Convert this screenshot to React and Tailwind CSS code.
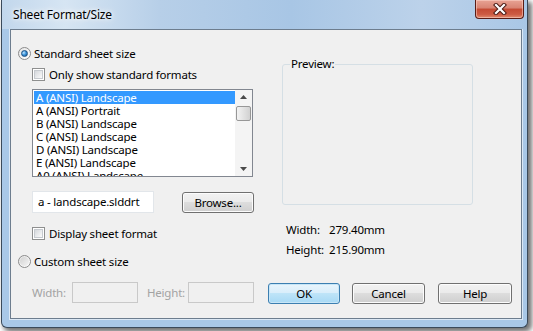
import React from "react";

function Radio({ checked }) {
  return (
    <span className="relative flex h-[13px] w-[13px] shrink-0 items-center justify-center rounded-full border border-[#8b8b8b] bg-gradient-to-br from-[#e6e6e6] to-[#ffffff]">
      {checked ? (
        <span className="h-[7px] w-[7px] rounded-full border border-[#1c4f82] bg-[radial-gradient(circle_at_35%_35%,#c4e6ff_0%,#3f97dc_45%,#0c4f92_100%)]" />
      ) : (
        <span className="h-[9px] w-[9px] rounded-full bg-gradient-to-br from-[#d2d2d2] to-[#f4f4f4]" />
      )}
    </span>
  );
}

function Check() {
  return (
    <span className="flex h-[13px] w-[13px] shrink-0 items-center justify-center border border-[#8e8f8f] bg-white">
      <span className="h-[9px] w-[9px] border border-[#c6cacf] bg-gradient-to-br from-[#d5d8dc] to-[#fbfbfb]" />
    </span>
  );
}

function Btn({ children, def, className = "" }) {
  return (
    <div
      className={
        "flex h-[21px] items-center justify-center rounded-[3px] border text-black " +
        (def
          ? "border-[#3c7fb1] bg-[linear-gradient(#e9f5fc_0%,#d9eefb_45%,#bee4f8_50%,#a7d9f5_100%)] shadow-[inset_0_0_0_1px_#c8e6f7]"
          : "border-[#707070] bg-[linear-gradient(#f2f2f2_0%,#ebebeb_45%,#dddddd_50%,#cfcfcf_100%)] shadow-[inset_0_0_0_1px_#fcfcfc]") +
        " " +
        className
      }
    >
      {children}
    </div>
  );
}

const items = [
  "A (ANSI) Landscape",
  "A (ANSI) Portrait",
  "B (ANSI) Landscape",
  "C (ANSI) Landscape",
  "D (ANSI) Landscape",
  "E (ANSI) Landscape",
  "A0 (ANSI) Landscape",
];

export default function App() {
  return (
    <div className="h-[331px] w-[533px] overflow-hidden bg-white font-['Noto_Sans',sans-serif] text-[11.5px] leading-[16px] tracking-[-0.2px] text-black">
      <div className="ml-[1px] flex h-[328px] w-[527px] flex-col rounded-b-[6px] border-x border-b border-[#3b4a5a] bg-[#a9c8e7] shadow-[3px_3px_5px_1px_rgba(0,0,0,0.55)]">
        {/* title bar */}
        <div className="relative flex h-[29px] shrink-0 items-start bg-[linear-gradient(90deg,#c2d7ec_0%,#d6e5f3_12%,#b7cfe8_30%,#a8c6e5_55%,#bcd2ea_80%,#a9c7e6_100%)]">
          <span className="ml-[11px] mt-[7px] text-[12px] leading-[16px] text-black [text-shadow:0_0_8px_#ffffff,0_0_4px_#ffffff]">
            Sheet Format/Size
          </span>
          <div className="absolute left-[473px] top-0 flex h-[19px] w-[49px] items-center justify-center rounded-b-[4px] border border-t-0 border-[#5a1d16] bg-[linear-gradient(#e8a394_0%,#d88372_45%,#c44a33_50%,#cd5b43_80%,#e08b6f_100%)] shadow-[inset_0_0_0_1px_rgba(255,220,210,0.5)]">
            <svg width="14" height="12" viewBox="0 0 14 12">
              <path d="M3 2 L11 10 M11 2 L3 10" stroke="#4b1a14" strokeWidth="4.2" strokeLinecap="square" />
              <path d="M3 2 L11 10 M11 2 L3 10" stroke="#ffffff" strokeWidth="2.2" strokeLinecap="square" />
            </svg>
          </div>
        </div>
        {/* client panel */}
        <div className="ml-[8px] flex h-[290px] w-[512px] items-start border border-[#6d7d8e] bg-[#f0f0f0] shadow-[0_0_0_1px_#dbe8f5]">
          {/* left column */}
          <div className="ml-[7px] mt-[17px] flex w-[236px] flex-col">
            <div className="flex h-[13px] items-center gap-[3px]">
              <Radio checked />
              <span>Standard sheet size</span>
            </div>
            <div className="ml-[14px] mt-[8px] flex h-[13px] items-center gap-[4px]">
              <Check />
              <span>Only show standard formats</span>
            </div>
            <div className="ml-[14px] mt-[8px] flex h-[88px] w-[221px] overflow-hidden border border-[#828790] bg-white">
              <div className="flex-1 overflow-hidden pl-[1px] pt-[1px]">
                {items.map((t, i) => (
                  <div
                    key={t}
                    className={
                      "h-[13px] overflow-hidden pl-[2px] text-[11.5px] leading-[13px] whitespace-nowrap " +
                      (i === 0 ? "bg-[#3399ff] text-white" : "text-black")
                    }
                  >
                    {t}
                  </div>
                ))}
              </div>
              <div className="flex w-[17px] flex-col items-center bg-[#f4f4f4]">
                <svg className="mt-[5px]" width="7" height="4" viewBox="0 0 7 4">
                  <path d="M0 4 L3.5 0 L7 4 Z" fill="#4a4a4a" />
                </svg>
                <div className="mt-[7px] h-[15px] w-[15px] rounded-[2px] border border-[#979797] bg-[linear-gradient(90deg,#f3f3f3,#e2e2e2_50%,#d1d1d1)]" />
                <div className="flex-1" />
                <svg className="mb-[5px]" width="7" height="4" viewBox="0 0 7 4">
                  <path d="M0 0 L7 0 L3.5 4 Z" fill="#4a4a4a" />
                </svg>
              </div>
            </div>
            <div className="ml-[14px] mt-[14px] flex items-start">
              <div className="flex h-[22px] w-[122px] items-center border border-[#e2e6ea] bg-white pl-[5px]">
                a - landscape.slddrt
              </div>
              <Btn className="ml-[28px] mt-[1px] w-[72px]">Browse...</Btn>
            </div>
            <div className="ml-[14px] mt-[14px] flex h-[13px] items-center gap-[4px]">
              <Check />
              <span>Display sheet format</span>
            </div>
            <div className="mt-[15px] flex h-[13px] items-center gap-[3px]">
              <Radio />
              <span>Custom sheet size</span>
            </div>
            <div className="ml-[14px] mt-[14px] flex items-center">
              <span className="w-[40px] text-[#a3a3a3]">Width:</span>
              <div className="h-[21px] w-[66px] border border-[#c9c9c9] bg-[#f0f0f0]" />
              <span className="ml-[9px] w-[41px] text-[#a3a3a3]">Height:</span>
              <div className="h-[21px] w-[66px] border border-[#c9c9c9] bg-[#f0f0f0]" />
            </div>
          </div>
          {/* right column */}
          <div className="ml-[14px] mt-[26px] flex w-[244px] flex-col">
            <fieldset className="ml-[14px] h-[149px] w-[191px] rounded-[3px] border border-[#d5dfe5]">
              <legend className="ml-[7px] px-[1px] leading-[16px]">Preview:</legend>
            </fieldset>
            <div className="ml-[18px] mt-[17px] flex h-[16px] items-center">
              <span className="w-[43px]">Width:</span>
              <span>279.40mm</span>
            </div>
            <div className="ml-[18px] mt-[4px] flex h-[16px] items-center">
              <span className="w-[43px]">Height:</span>
              <span>215.90mm</span>
            </div>
            <div className="mt-[25px] flex">
              <Btn def className="w-[72px]">OK</Btn>
              <Btn className="ml-[12px] w-[73px]">Cancel</Btn>
              <Btn className="ml-[13px] w-[74px]">Help</Btn>
            </div>
          </div>
        </div>
      </div>
    </div>
  );
}
